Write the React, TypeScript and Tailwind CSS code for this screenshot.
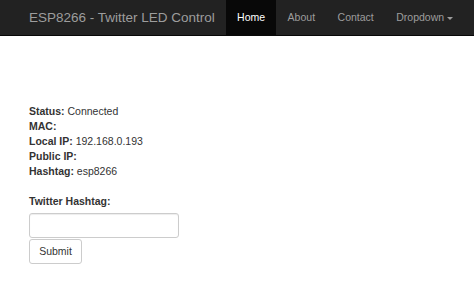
const NAV = [
  { label: 'Home', active: true },
  { label: 'About' },
  { label: 'Contact' },
];

export default function App() {
  return (
    <div className="min-h-screen bg-white font-['Liberation_Sans',Arial,sans-serif] text-[10.5px] leading-[15px] text-[#333]">
      <nav className="flex h-[36px] border-b border-[#080808] bg-[#222]">
        <a className="ml-[18px] flex items-center px-[11px] text-[13.5px] text-[#9d9d9d]">
          ESP8266 - Twitter LED Control
        </a>
        <ul className="flex">
          {NAV.map((item) => (
            <li
              key={item.label}
              className={
                item.active
                  ? 'flex items-center bg-[#080808] px-[11.25px] text-white'
                  : 'flex items-center px-[11.25px] text-[#9d9d9d]'
              }
            >
              {item.label}
            </li>
          ))}
          <li className="flex items-center px-[11.25px] text-[#9d9d9d]">
            Dropdown
            <span className="ml-[3px] mt-[1px] h-0 w-0 border-x-[3px] border-t-[3px] border-x-transparent border-t-[#9d9d9d]" />
          </li>
        </ul>
      </nav>

      <main className="pl-[29px] pt-[67.5px]">
        <div>
          <b>Status:</b> Connected
        </div>
        <div>
          <b>MAC:</b>
        </div>
        <div>
          <b>Local IP:</b> 192.168.0.193
        </div>
        <div>
          <b>Public IP:</b>
        </div>
        <div>
          <b>Hashtag:</b> esp8266
        </div>

        <form className="mt-[15px]" onSubmit={(e) => e.preventDefault()}>
          <label className="mb-[4px] block font-bold">Twitter Hashtag:</label>
          <input
            type="text"
            className="block h-[25px] w-[150px] rounded-[3px] border border-[#ccc] px-[9px] shadow-[inset_0_1px_1px_rgba(0,0,0,0.075)] outline-none"
          />
          <button
            type="submit"
            className="mt-[1px] block h-[25px] w-[53px] rounded-[3px] border border-[#ccc] bg-white text-[10.5px] text-[#333]"
          >
            Submit
          </button>
        </form>
      </main>
    </div>
  );
}
